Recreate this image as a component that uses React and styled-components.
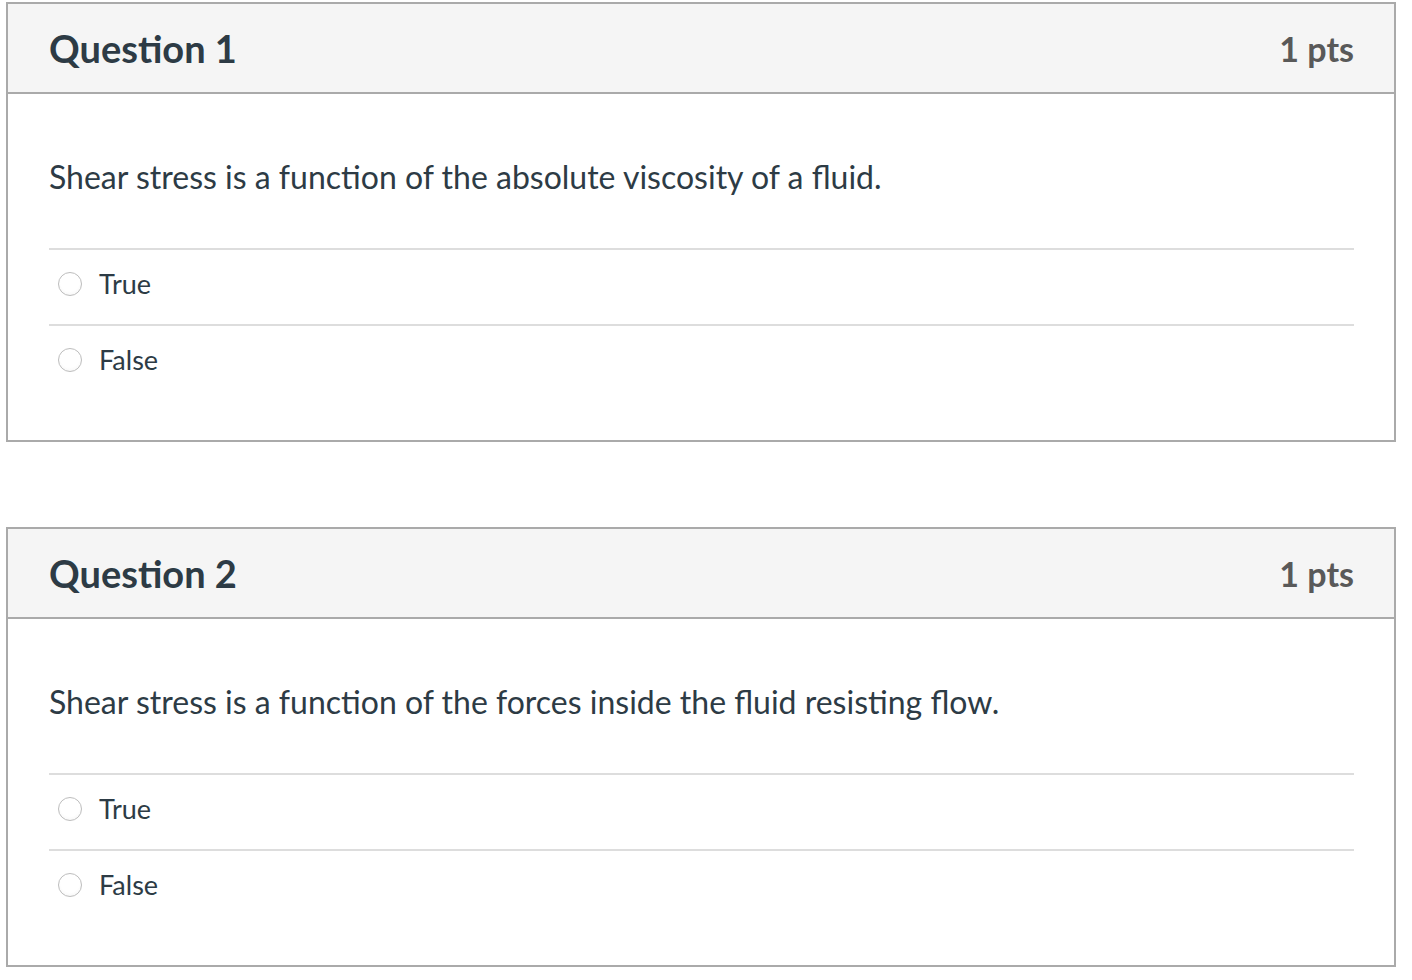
import React from "react";
import styled, { createGlobalStyle } from "styled-components";

const Global = createGlobalStyle`
  html, body { margin: 0; padding: 0; background: #fff; }
  body { font-family: Lato, "Open Sans", sans-serif; color: #2d3b45; }
`;

const Page = styled.div`
  display: flex;
  flex-direction: column;
  gap: 85px;
  padding: 2px 16px 0 6px;
`;

const Card = styled.section`
  border: 2px solid #aaaaaa;
  height: 440px;
  box-sizing: border-box;
  display: flex;
  flex-direction: column;
`;

const Header = styled.header`
  background: #f5f5f5;
  border-bottom: 2px solid #aaaaaa;
  height: 90px;
  box-sizing: border-box;
  display: flex;
  align-items: center;
  justify-content: space-between;
  padding: 0 40px 0 41px;
`;

const Title = styled.h2`
  margin: 0;
  font-family: Lato, sans-serif;
  font-weight: 700;
  font-size: 38px;
  color: #2d3b45;
`;

const Points = styled.div`
  font-family: Lato, sans-serif;
  font-weight: 700;
  font-size: 34px;
  color: #595959;
`;

const Body = styled.div`
  padding: 64px 40px 0 41px;
`;

const Prompt = styled.p`
  margin: 0 0 52px;
  font-size: 32px;
  line-height: 38px;
  color: #2d3b45;
`;

const Answers = styled.div`
  display: flex;
  flex-direction: column;
`;

const Answer = styled.label`
  display: flex;
  align-items: center;
  gap: 17px;
  height: 76px;
  border-top: 2px solid #dddddd;
  box-sizing: border-box;
  padding: 0 0 7px 9px;
  font-size: 27px;
  color: #2d3b45;
`;

const Radio = styled.span`
  width: 24px;
  height: 24px;
  border-radius: 50%;
  border: 1px solid #bdbdbd;
  background: radial-gradient(circle at 50% 40%, #ffffff 55%, #f1f1f1 100%);
  box-sizing: border-box;
  flex: none;
`;

const questions = [
  { n: 1, text: "Shear stress is a function of the absolute viscosity of a fluid." },
  { n: 2, text: "Shear stress is a function of the forces inside the fluid resisting flow." },
];

export default function App() {
  return (
    <>
      <Global />
      <Page>
        {questions.map((q) => (
          <Card key={q.n}>
            <Header>
              <Title>Question {q.n}</Title>
              <Points>1 pts</Points>
            </Header>
            <Body>
              <Prompt>{q.text}</Prompt>
              <Answers>
                {["True", "False"].map((a) => (
                  <Answer key={a}>
                    <Radio />
                    {a}
                  </Answer>
                ))}
              </Answers>
            </Body>
          </Card>
        ))}
      </Page>
    </>
  );
}
